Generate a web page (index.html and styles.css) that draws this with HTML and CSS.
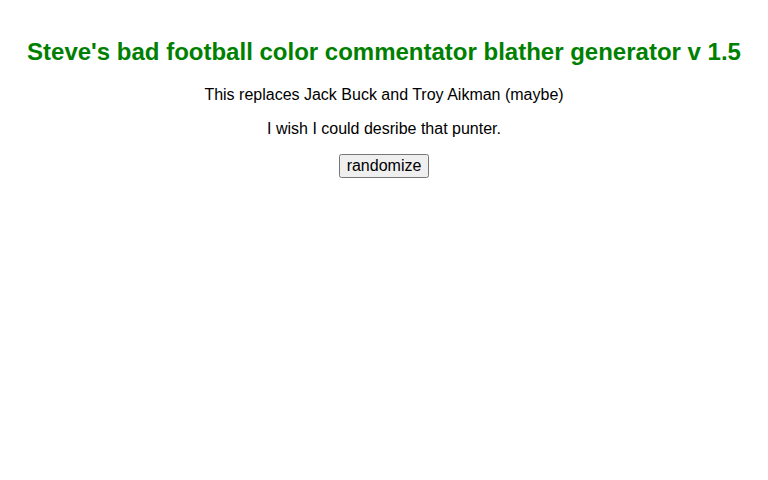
FILE: index.html
```html
<!DOCTYPE html>
<html lang="en">
<head>
    <meta charset="UTF-8">
    <title>Steve's bad football color commentator blather generator</title>
    <link rel="stylesheet" href="styles.css">
</head>
<body>
    <div class="page">
        <h1 class="title">Steve's bad football color commentator blather generator v 1.5</h1>
        <p class="subtitle">This replaces Jack Buck and Troy Aikman (maybe)</p>
        <p id="blather" class="blather">I wish I could desribe that punter.</p>
        <button class="randomize">randomize</button>
    </div>
</body>
</html>
```

FILE: styles.css
```css
body {
    font-family: "Liberation Sans", Arial, sans-serif;
    margin: 8px;
    color: #000;
    background: #fff;
}
.page {
    text-align: center;
    padding-top: 30px;
}
.title {
    color: green;
    font-size: 24px;
    margin: 0 0 20px;
}
.subtitle, .blather {
    font-size: 16px;
    margin: 0 0 16px;
}
.randomize {
    font-family: "Liberation Sans", Arial, sans-serif;
    font-size: 16px;
}
```
